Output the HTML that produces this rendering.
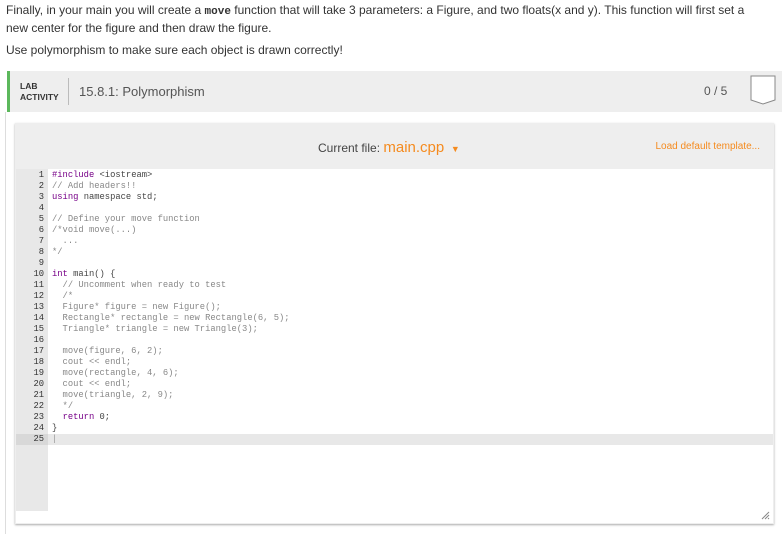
<!DOCTYPE html>
<html><head><style>
body{margin:0;width:782px;height:534px;background:#fff;font-family:"Liberation Sans",sans-serif;position:relative;overflow:hidden}
.p{position:absolute;left:6px;width:760px;font-size:12px;color:#333;margin:0}
code{font-family:"Liberation Mono",monospace;font-size:11px;font-weight:bold}
.vl{position:absolute;left:5px;top:112px;width:1px;height:422px;background:#ddd}
.hdr{position:absolute;left:7px;top:71px;width:775px;height:41px;background:#eee;border-left:3px solid #5cb85c;box-sizing:border-box}
.lab{position:absolute;left:10px;top:10px;font-size:8.5px;font-weight:bold;color:#333;line-height:11px}
.sep{position:absolute;left:58px;top:7px;width:1px;height:27px;background:#bbb}
.title{position:absolute;left:69px;top:13px;font-size:13px;color:#555}
.score{position:absolute;left:694px;top:13px;font-size:12px;color:#555}
.box{position:absolute;left:740px;top:4px}
.ed{position:absolute;left:15px;top:123px;width:759px;height:401px;background:#eee;box-shadow:0 1px 2px #aaa}
.cf{position:absolute;left:303px;top:16px;font-size:12px;color:#444}
.cf b{font-weight:normal;color:#f58b1f;font-size:15px}
.ld{position:absolute;right:14px;top:18px;font-size:10px;color:#f58b1f}
.area{position:absolute;left:1px;top:46px;width:757px;height:354px;background:#fff}
.gut{position:absolute;left:0;top:0;width:32px;height:342px;background:#e8e8e8}
pre{margin:0;position:absolute;top:1px;font-family:"Liberation Mono",monospace;font-size:8.8px;line-height:11px}
.num{left:0;width:28px;text-align:right;color:#333}
.code{left:36px;color:#888}
.k{color:#708}
.n{color:#444}
.cur{position:absolute;left:0;top:265px;width:757px;height:11px;background:#e8e8e8}
.cur2{position:absolute;left:0;top:265px;width:32px;height:11px;background:#d8d8d8}
</style></head><body>
<p class="p" style="top:2px;line-height:16px">Finally, in your main you will create a <code>move</code> function that will take 3 parameters: a Figure, and two floats(x and y). This function will first set a<br>new center for the figure and then draw the figure.</p>
<p class="p" style="top:43px">Use polymorphism to make sure each object is drawn correctly!</p>
<div class="vl"></div>
<div class="hdr">
<div class="lab">LAB<br>ACTIVITY</div><div class="sep"></div>
<div class="title">15.8.1: Polymorphism</div>
<div class="score">0 / 5</div>
<svg class="box" width="28" height="32"><path d="M1 1H25V25L13 29L1 25Z" fill="#fff" stroke="#888" stroke-width="1"/></svg>
</div>
<div class="ed">
<div class="cf">Current file: <b>main.cpp</b> &nbsp;<span style="color:#f58b1f;font-size:9px">▼</span></div>
<div class="ld">Load default template...</div>
<div class="area">
<div class="gut"></div><div class="cur"></div><div class="cur2"></div>
<pre class="num">1
2
3
4
5
6
7
8
9
10
11
12
13
14
15
16
17
18
19
20
21
22
23
24
25</pre>
<pre class="code"><span class="k">#include</span> <span class="n">&lt;iostream&gt;</span>
// Add headers!!
<span class="k">using</span> <span class="n">namespace std;</span>

// Define your move function
/*void move(...)
  ...
*/

<span class="k">int</span> <span class="n">main() {</span>
  // Uncomment when ready to test
  /*
  Figure* figure = new Figure();
  Rectangle* rectangle = new Rectangle(6, 5);
  Triangle* triangle = new Triangle(3);

  move(figure, 6, 2);
  cout &lt;&lt; endl;
  move(rectangle, 4, 6);
  cout &lt;&lt; endl;
  move(triangle, 2, 9);
  */
  <span class="k">return</span> <span class="n">0;</span>
<span class="n">}</span>
<span style="color:#999">|</span></pre>
<svg style="position:absolute;right:3px;bottom:3px" width="9" height="9"><path d="M1 8L8 1M4 8L8 4M7 8L8 7" stroke="#888" stroke-width="1"/></svg>
</div>
</div>
</body></html>
